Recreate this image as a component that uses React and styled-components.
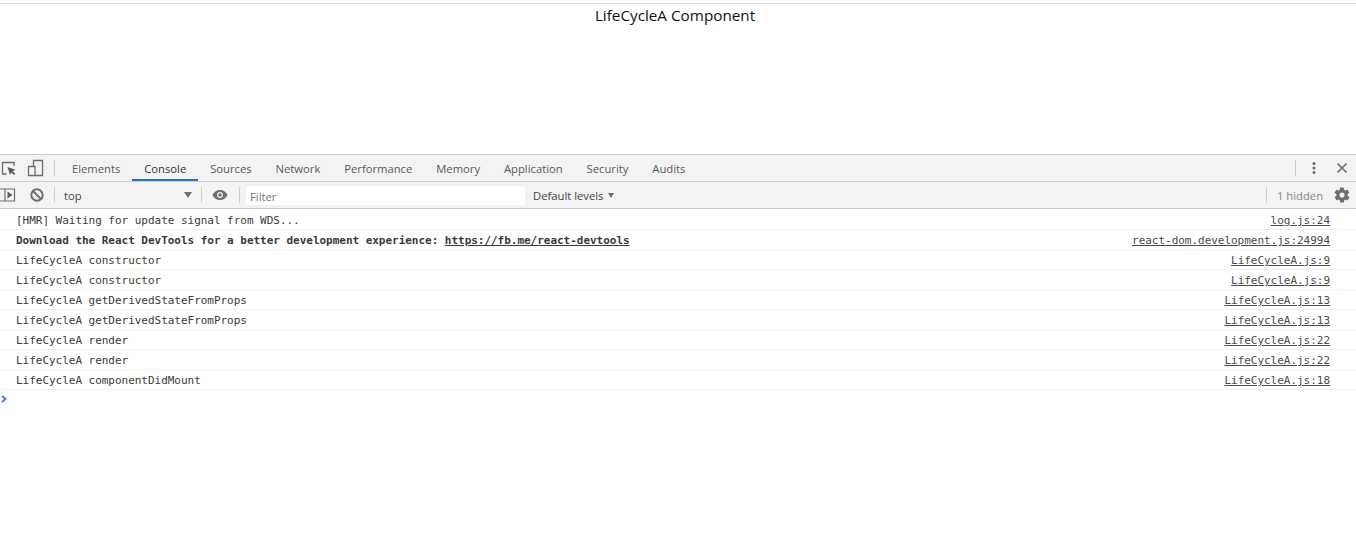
import React from 'react'
import styled, { createGlobalStyle } from 'styled-components'

const tabs = ['Elements', 'Console', 'Sources', 'Network', 'Performance', 'Memory', 'Application', 'Security', 'Audits']

const messages = [
  { text: '[HMR] Waiting for update signal from WDS...', source: 'log.js:24' },
  {
    text: 'Download the React DevTools for a better development experience: ',
    link: 'https://fb.me/react-devtools',
    source: 'react-dom.development.js:24994',
    bold: true,
  },
  { text: 'LifeCycleA constructor', source: 'LifeCycleA.js:9' },
  { text: 'LifeCycleA constructor', source: 'LifeCycleA.js:9' },
  { text: 'LifeCycleA getDerivedStateFromProps', source: 'LifeCycleA.js:13' },
  { text: 'LifeCycleA getDerivedStateFromProps', source: 'LifeCycleA.js:13' },
  { text: 'LifeCycleA render', source: 'LifeCycleA.js:22' },
  { text: 'LifeCycleA render', source: 'LifeCycleA.js:22' },
  { text: 'LifeCycleA componentDidMount', source: 'LifeCycleA.js:18' },
]

function App() {
  return (
    <>
      <GlobalStyle />
      <Page>
        <Heading>LifeCycleA Component</Heading>
      </Page>
      <Devtools>
        <TabBar>
          <IconSlot $width={18}>
            <svg width="16" height="16" viewBox="0 0 16 16" fill="none">
              <path d="M5.5 14H1.5V2.5H13V6" stroke="#6e6e6e" strokeWidth="1.3" />
              <path d="M6.5 7L14.5 9.8L11.8 11.2L14.3 13.8L13 15L10.5 12.5L9 15Z" fill="#5a5a5a" />
            </svg>
          </IconSlot>
          <IconSlot $width={35}>
            <svg width="17" height="18" viewBox="0 0 17 18" fill="none">
              <path d="M6.5 7.5V1.5H15.5V16.5H8" stroke="#6e6e6e" strokeWidth="1.3" />
              <path d="M1.5 7.5H8V16.5H1.5Z" stroke="#6e6e6e" strokeWidth="1.3" />
            </svg>
          </IconSlot>
          <Divider $left={1} $right={5} />
          <Tabs>
            {tabs.map((tab) => (
              <Tab key={tab} $active={tab === 'Console'}>{tab}</Tab>
            ))}
          </Tabs>
          <Spacer />
          <Divider />
          <IconSlot $width={36}>
            <svg width="4" height="14" viewBox="0 0 4 14">
              <circle cx="2" cy="2.5" r="1.5" fill="#6e6e6e" />
              <circle cx="2" cy="7" r="1.5" fill="#6e6e6e" />
              <circle cx="2" cy="11.5" r="1.5" fill="#6e6e6e" />
            </svg>
          </IconSlot>
          <IconSlot $width={20}>
            <svg width="12" height="12" viewBox="0 0 12 12">
              <path d="M1.5 1.5L10.5 10.5M10.5 1.5L1.5 10.5" stroke="#6e6e6e" strokeWidth="1.6" />
            </svg>
          </IconSlot>
          <EndGap />
        </TabBar>
        <Toolbar>
          <IconSlot $width={16}>
            <svg width="16" height="14" viewBox="0 0 16 14" fill="none">
              <path d="M0 1H14.5V13H0" stroke="#6e6e6e" strokeWidth="1.2" />
              <path d="M5 1V13" stroke="#6e6e6e" strokeWidth="1.2" />
              <path d="M7.5 3.5L12.5 7L7.5 10.5Z" fill="#5a5a5a" />
            </svg>
          </IconSlot>
          <IconSlot $width={38} $shift={3}>
            <svg width="14" height="14" viewBox="0 0 14 14" fill="none">
              <circle cx="7" cy="7" r="5.7" stroke="#6e6e6e" strokeWidth="2" />
              <path d="M3 3L11 11" stroke="#6e6e6e" strokeWidth="2" />
            </svg>
          </IconSlot>
          <Divider $right={9} />
          <ContextSelect>
            top
            <Caret $size={4} />
          </ContextSelect>
          <Divider />
          <IconSlot $width={37}>
            <svg width="18" height="12" viewBox="0 0 18 12">
              <path d="M8 1C4.5 1 1.7 3.1 0.5 6C1.7 8.9 4.5 11 8 11S14.3 8.9 15.5 6C14.3 3.1 11.5 1 8 1Z" fill="#6e6e6e" />
              <circle cx="8" cy="6" r="2.9" fill="#f3f3f3" />
              <circle cx="8" cy="6" r="1.7" fill="#6e6e6e" />
            </svg>
          </IconSlot>
          <Divider $right={6} />
          <Filter>Filter</Filter>
          <Levels>
            Default levels
            <Caret $size={3.5} />
          </Levels>
          <Spacer />
          <Divider $right={10} />
          <Hidden>1 hidden</Hidden>
          <IconSlot $width={20}>
            <svg width="18" height="18" viewBox="0 0 24 24">
              <path
                fill="#6e6e6e"
                d="M19.4 13c.1-.3.1-.7.1-1s0-.7-.1-1l2.1-1.6c.2-.2.2-.4.1-.6l-2-3.5c-.1-.2-.4-.3-.6-.2l-2.5 1c-.5-.4-1.1-.7-1.7-1l-.4-2.6c0-.3-.2-.5-.5-.5h-4c-.3 0-.5.2-.5.4l-.4 2.7c-.6.3-1.2.6-1.7 1l-2.5-1c-.2-.1-.5 0-.6.2l-2 3.5c-.1.2-.1.5.1.6L4.6 11c0 .3-.1.7-.1 1s0 .7.1 1l-2.1 1.6c-.2.2-.2.4-.1.6l2 3.5c.1.2.4.3.6.2l2.5-1c.5.4 1.1.7 1.7 1l.4 2.6c0 .3.2.5.5.5h4c.3 0 .5-.2.5-.4l.4-2.7c.6-.3 1.2-.6 1.7-1l2.5 1c.2.1.5 0 .6-.2l2-3.5c.1-.2.1-.5-.1-.6L19.4 13zM12 15.5c-1.9 0-3.5-1.6-3.5-3.5s1.6-3.5 3.5-3.5 3.5 1.6 3.5 3.5-1.6 3.5-3.5 3.5z"
              />
            </svg>
          </IconSlot>
          <EndGap />
        </Toolbar>
        <Messages>
          {messages.map((message, index) => (
            <Message key={index}>
              <MessageText $bold={message.bold}>
                {message.text}
                {message.link && <u>{message.link}</u>}
              </MessageText>
              <Source>{message.source}</Source>
            </Message>
          ))}
        </Messages>
        <Prompt>
          <svg width="6" height="8" viewBox="0 0 6 8" fill="none">
            <path d="M1 1L4.5 4L1 7" stroke="#3b78e7" strokeWidth="1.7" />
          </svg>
        </Prompt>
      </Devtools>
    </>
  )
}

export default App

const GlobalStyle = createGlobalStyle`
  html, body {
    margin: 0;
    padding: 0;
    background: #fff;
  }
  body {
    width: 1356px;
    height: 549px;
    overflow: hidden;
  }
`

const Page = styled.div`
  height: 150px;
  margin-top: 3px;
  padding-right: 6px;
  border-top: 1px solid #dcdcdc;
  text-align: center;
  font-family: "Open Sans", sans-serif;
`

const Heading = styled.div`
  font-size: 15.25px;
  line-height: 23px;
  color: #111;
`

const Devtools = styled.div`
  border-top: 1px solid #cdcdcd;
  font-family: "Open Sans", sans-serif;
`

const TabBar = styled.div`
  display: flex;
  align-items: center;
  height: 26px;
  background: #f3f3f3;
  border-bottom: 1px solid #cdcdcd;
`

const Toolbar = styled(TabBar)``

const IconSlot = styled.div`
  flex: none;
  box-sizing: border-box;
  display: flex;
  align-items: center;
  justify-content: center;
  width: ${(p) => p.$width}px;
  height: 100%;
  padding-left: ${(p) => p.$shift || 0}px;
`

const Divider = styled.div`
  flex: none;
  width: 1px;
  height: 16px;
  margin-left: ${(p) => p.$left || 0}px;
  margin-right: ${(p) => p.$right || 0}px;
  background: #cfcfcf;
`

const Tabs = styled.div`
  display: flex;
  height: 100%;
`

const Tab = styled.div`
  display: flex;
  align-items: center;
  padding: 0 11.95px;
  font-size: 11.25px;
  color: ${(p) => (p.$active ? '#333' : '#5a5a5a')};
  box-shadow: ${(p) => (p.$active ? 'inset 0 -2px 0 #1a73e8' : 'none')};
`

const Spacer = styled.div`
  flex: 1;
`

const EndGap = styled.div`
  flex: none;
  width: 4px;
`

const ContextSelect = styled.div`
  flex: none;
  width: 137px;
  box-sizing: border-box;
  padding-right: 9px;
  display: flex;
  align-items: center;
  justify-content: space-between;
  font-size: 11.25px;
  color: #444;
`

const Caret = styled.span`
  display: inline-block;
  width: 0;
  height: 0;
  margin-left: 5px;
  border-left: ${(p) => p.$size}px solid transparent;
  border-right: ${(p) => p.$size}px solid transparent;
  border-top: ${(p) => p.$size * 1.6}px solid #6e6e6e;
`

const Filter = styled.div`
  flex: none;
  box-sizing: border-box;
  width: 279px;
  height: 19px;
  padding-left: 4px;
  background: #fff;
  font-size: 11.25px;
  line-height: 21px;
  color: #757575;
`

const Levels = styled.div`
  flex: none;
  display: flex;
  align-items: center;
  margin-left: 8px;
  font-size: 11.25px;
  color: #444;
`

const Hidden = styled.div`
  flex: none;
  width: 55px;
  font-size: 11.25px;
  color: #8a8a8a;
`

const Messages = styled.div`
  padding-top: 1px;
  font-family: "DejaVu Sans Mono", monospace;
  font-size: 11px;
  letter-spacing: -0.025px;
`

const Message = styled.div`
  display: flex;
  justify-content: space-between;
  align-items: center;
  box-sizing: border-box;
  height: 20px;
  padding: 2px 26px 0 16px;
  border-bottom: 1px solid #f0f0f0;
`

const MessageText = styled.span`
  color: #3a3a3a;
  font-weight: ${(p) => (p.$bold ? 700 : 400)};
  white-space: pre;
`

const Source = styled.span`
  color: #4a4a4a;
  text-decoration: underline;
`

const Prompt = styled.div`
  display: flex;
  align-items: center;
  height: 18px;
  padding-left: 1px;
`
